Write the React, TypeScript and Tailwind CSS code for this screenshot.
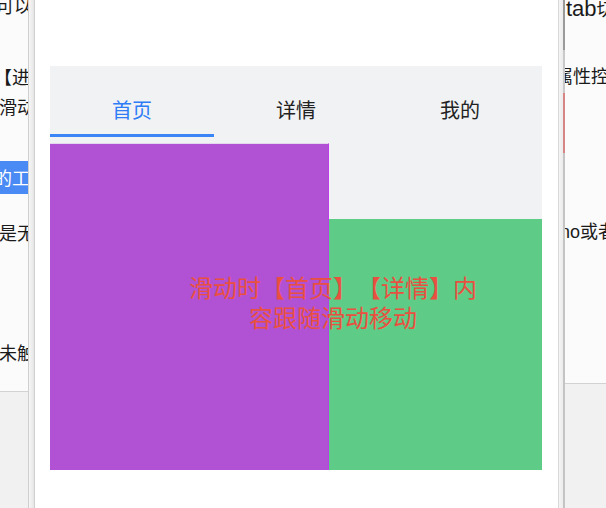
import React from "react";

const cjk = { fontFamily: '"Noto Sans CJK SC", "Noto Sans", "Liberation Sans", sans-serif' };

export default function App() {
  return (
    <div
      className="w-[606px] h-[508px] overflow-hidden flex bg-white text-[#1a1a1a] [text-spacing-trim:space-all]"
      style={cjk}
    >
      {/* left background page */}
      <div className="w-[28px] h-full shrink-0 overflow-hidden flex flex-col bg-[#fbfbfb] text-[18px] leading-[24px]">
        <div className="h-[24px] mt-[-7px] ml-[-4px] whitespace-nowrap">可以使用</div>
        <div className="h-[24px] mt-[47px] ml-[-6px] whitespace-nowrap">【进行</div>
        <div className="h-[24px] mt-[6px] ml-[-1px] whitespace-nowrap">滑动切换</div>
        <div className="h-[33px] mt-[43px] bg-[#4a8af4] text-white leading-[33px] whitespace-nowrap">
          <span className="ml-[-6px] inline-block">的工程</span>
        </div>
        <div className="h-[24px] mt-[26px] ml-[-1px] whitespace-nowrap">是无法</div>
        <div className="h-[24px] mt-[96px] ml-[-1px] whitespace-nowrap">未触发</div>
        <div className="mt-[27px] border-t border-[#d2d2d2] flex-1 bg-[#f1f1f1]" />
      </div>

      {/* left strip */}
      <div className="w-[7px] h-full shrink-0 border-l border-r border-[#cfcfcf] bg-gradient-to-r from-[#f6f6f6] to-[#e6e6e6]" />

      {/* modal */}
      <div className="w-[523px] h-full shrink-0 bg-white pt-[66px] pl-[15px] pr-[16px]">
        <div className="h-[404px] bg-[#f1f2f4] flex flex-col">
          <div className="h-[71px] flex text-[20px]">
            {[
              { t: "首页", a: true },
              { t: "详情", a: false },
              { t: "我的", a: false },
            ].map((tab) => (
              <div key={tab.t} className="flex-1 flex flex-col">
                <div
                  className={
                    "h-[68px] flex items-end justify-center pb-[9px] leading-[30px] " +
                    (tab.a ? "text-[#2f7cf6]" : "text-[#222222]")
                  }
                >
                  {tab.t}
                </div>
                <div className={"h-[3px] " + (tab.a ? "bg-[#3a84f6]" : "bg-transparent")} />
              </div>
            ))}
          </div>
          <div className="flex-1 relative flex items-end">
            <div className="w-[279px] h-[327px] bg-[#b152d5] border-r border-[#bb3fe6] border-t border-t-[#e4d9ec]" />
            <div className="flex-1 h-[251px] bg-[#5ecb87]" />
            <div className="absolute left-[135px] top-[135px] w-[296px] text-center text-[24px] leading-[30px] text-[#e9503f]">
              滑动时【首页】【详情】内容跟随滑动移动
            </div>
          </div>
        </div>
      </div>

      {/* right strip */}
      <div className="w-[7px] h-full shrink-0 flex">
        <div className="flex-1 border-l border-[#d8d8d8] bg-gradient-to-r from-[#f4f4f4] to-[#ececec]" />
        <div className="w-[2px] h-full flex flex-col">
          <div className="h-[50px] bg-[#9a9a9a]" />
          <div className="h-[43px] bg-[#c9c9c9]" />
          <div className="h-[60px] bg-[#d98585]" />
          <div className="flex-1 bg-[#c4c4c4]" />
        </div>
      </div>

      {/* right background page */}
      <div className="flex-1 h-full overflow-hidden flex flex-col bg-[#fbfbfb] text-[18px] leading-[24px]">
        <div className="h-[24px] mt-[-4px] ml-[1px] whitespace-nowrap">
          <span className="text-[22px]" style={{ fontFamily: '"Liberation Sans", sans-serif' }}>tab</span>切换
        </div>
        <div className="h-[24px] mt-[43px] ml-[-10px] whitespace-nowrap">属性控制</div>
        <div className="h-[24px] mt-[131px] ml-[-5px] whitespace-nowrap">
          <span style={{ fontFamily: '"Liberation Sans", sans-serif' }}>no</span>或者
        </div>
        <div className="mt-[141px] border-t border-[#d2d2d2] flex-1 bg-[#f1f1f1]" />
      </div>
    </div>
  );
}
